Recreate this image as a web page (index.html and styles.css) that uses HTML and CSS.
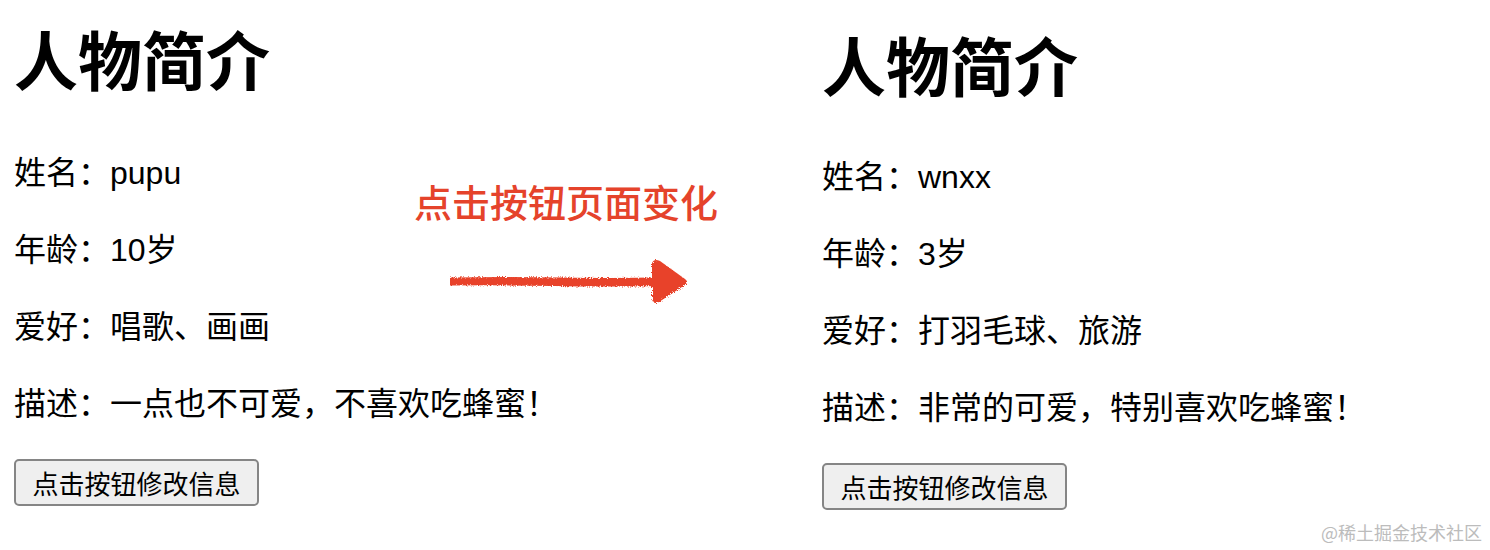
FILE: index.html
```html
<!DOCTYPE html>
<html lang="zh-CN">
<head>
<meta charset="utf-8">
<title>人物简介</title>
<link rel="stylesheet" href="styles.css">
</head>
<body>
<div class="page">
  <section class="panel">
    <h1 class="title">人物简介</h1>
    <p class="row">姓名：pupu</p>
    <p class="row">年龄：10岁</p>
    <p class="row">爱好：唱歌、画画</p>
    <p class="row">描述：一点也不可爱，不喜欢吃蜂蜜！</p>
    <button class="btn">点击按钮修改信息</button>
  </section>
  <section class="middle">
    <div class="note">点击按钮页面变化</div>
    <svg class="arrow" width="250" height="55" viewBox="0 0 250 55">
      <defs>
        <filter id="rough" x="-5%" y="-30%" width="110%" height="160%">
          <feTurbulence type="fractalNoise" baseFrequency="0.8" numOctaves="2" seed="5" result="n"/>
          <feDisplacementMap in="SourceGraphic" in2="n" scale="4"/>
        </filter>
      </defs>
      <g filter="url(#rough)" fill="#e8432a">
        <path d="M5 22.5 Q60 21.5 120 22.5 T214 22 L214 31 Q160 32 110 31 T5 30.5 Z"/>
        <path d="M207 8 Q209 3 215 6 L240 24 Q244 27 240 30 L214 47 Q208 50 207 44 Z"/>
      </g>
    </svg>
  </section>
  <section class="panel panel-right">
    <h1 class="title title-right">人物简介</h1>
    <p class="row">姓名：wnxx</p>
    <p class="row">年龄：3岁</p>
    <p class="row">爱好：打羽毛球、旅游</p>
    <p class="row">描述：非常的可爱，特别喜欢吃蜂蜜！</p>
    <button class="btn">点击按钮修改信息</button>
  </section>
</div>
<div class="watermark">@稀土掘金技术社区</div>
</body>
</html>
```

FILE: styles.css
```css
html, body {
  margin: 0;
  padding: 0;
  background: #ffffff;
}

body {
  width: 1490px;
  height: 550px;
  overflow: hidden;
  position: relative;
  font-family: "Liberation Sans", "Noto Sans CJK SC", sans-serif;
  color: #000;
}

.page {
  display: grid;
  grid-template-columns: 400px 408px 1fr;
}

.panel {
  padding: 12px 0 0 14px;
}

.panel-right {
  padding-top: 18px;
}

.title {
  margin: 0 0 49px 0;
  font-family: "Noto Sans CJK SC", sans-serif;
  font-size: 64px;
  line-height: 90px;
  font-weight: 700;
}

.title-right {
  margin-bottom: 47px;
}

.row {
  margin: 0 0 32px 0;
  font-size: 32px;
  line-height: 45px;
  white-space: nowrap;
}

.btn {
  display: block;
  margin: 0;
  height: 47px;
  padding: 0 16.5px;
  font-family: "Noto Sans CJK SC", sans-serif;
  font-size: 26px;
  line-height: 1;
  color: #000;
  background: #efefef;
  border: 2px solid #858585;
  border-radius: 5px;
}

.middle {
  padding: 178px 0 0 14px;
}

.note {
  font-family: "Noto Sans CJK SC", sans-serif;
  font-size: 38px;
  line-height: 46px;
  font-weight: 500;
  color: #e5432b;
  white-space: nowrap;
}

.arrow {
  display: block;
  margin: 31px 0 0 31px;
}

.watermark {
  position: absolute;
  right: 8px;
  bottom: 5px;
  font-family: "Noto Sans CJK SC", sans-serif;
  font-size: 18px;
  color: #bcbcbc;
}
```
